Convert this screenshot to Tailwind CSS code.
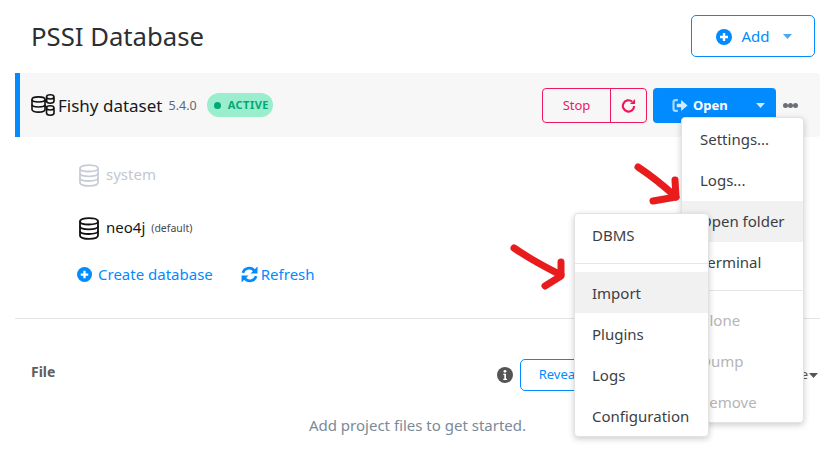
<!doctype html>
<html>
<head>
<meta charset="utf-8">
<script src="https://cdn.jsdelivr.net/npm/@tailwindcss/browser@4"></script>
</head>
<body class="bg-white">
<div class="relative w-[835px] h-[460px] overflow-hidden font-['Noto_Sans','Open_Sans',sans-serif] text-[#1f2328]">
  <div class="pl-[15px] pr-[15px]">
    <header class="flex items-center justify-between h-[73px] pl-[17px] pr-[5px] pb-[1px]">
      <h1 class="text-[25.700px] leading-none text-[#2b2f33] -ml-[1px] pt-[2px]">PSSI Database</h1>
      <button class="flex items-center justify-center w-[124px] h-[42px] border border-[#018bff] rounded-[5px] text-[#018bff] text-[15px] pl-[2px] pt-[1px]">
        <svg class="w-[16px] h-[16px] mr-[9px]" viewBox="0 0 16 16"><circle cx="8" cy="8" r="8" fill="#018bff"/><path d="M8 4v8M4 8h8" stroke="#fff" stroke-width="2.4"/></svg>
        Add
        <svg class="w-[9px] h-[5px] ml-[13px]" viewBox="0 0 9 5"><path d="M0 0h9L4.500 5z" fill="#4aa8f8"/></svg>
      </button>
    </header>

    <section class="flex items-center h-[64px] bg-[#f7f7f7] rounded-r-[4px] border-l-[5px] border-[#018bff] pl-[11px] pr-[22px]">
      <svg class="w-[24px] h-[24px] mr-[3px] shrink-0" viewBox="0 0 24 24" fill="none" stroke="#111" stroke-width="1.600">
        <path d="M1 6.500c0-3.500 13-3.500 13 0v10c0 3.500-13 3.500-13 0z"/><path d="M1 6.500c0 3.300 13 3.300 13 0M1 11.500c0 3.300 13 3.300 13 0"/>
        <path d="M15.500 4c0-3 7.500-3 7.500 0v4c0 3-7.500 3-7.500 0zM15.500 4c0 2.600 7.500 2.600 7.500 0"/>
        <path d="M15.500 15c0-3 7.500-3 7.500 0v5c0 3-7.500 3-7.500 0zM15.500 15c0 2.600 7.500 2.600 7.500 0"/>
        <path d="M14 12.500l2 2M14 9l2-2"/>
      </svg>
      <span class="text-[17px] text-[#16191c] whitespace-nowrap pt-[1px]">Fishy dataset</span>
      <span class="ml-[6px] text-[12.500px] text-[#5f6870] pt-[2px]">5.4.0</span>
      <span class="ml-[10px] flex items-center w-[66px] h-[24px] rounded-full bg-[#9aedcd] pl-[7px] text-[11px] font-bold tracking-[0.5px] text-[#00a878]">
        <span class="w-[7px] h-[7px] rounded-full bg-[#00a878] mr-[7px]"></span>ACTIVE
      </span>
      <div class="ml-auto flex items-center">
        <div class="flex h-[35px] w-[105px] border border-[#f0185c] rounded-[4px] text-[#f0185c]">
          <span class="flex items-center justify-center w-[68px] border-r border-[#f0185c] text-[13px] pt-[1px]">Stop</span>
          <span class="flex items-center justify-center flex-1">
            <svg class="w-[15px] h-[15px]" viewBox="0 0 16 16" fill="none" stroke="#f0185c" stroke-width="2.300"><path d="M14 8.500A6 6 0 1 1 11.800 3.800"/><path d="M15 1v5.500H9.500z" fill="#f0185c" stroke="none"/></svg>
          </span>
        </div>
        <button class="ml-[6px] flex items-center w-[123px] h-[35px] rounded-[4px] bg-[#018bff] text-white text-[13px] font-bold pl-[19px] pt-[1px]">
          <svg class="w-[16px] h-[13px] mr-[5px]" viewBox="0 0 14 12" fill="none"><path d="M5 1H3a2 2 0 0 0-2 2v6a2 2 0 0 0 2 2h2" stroke="#a9d8ff" stroke-width="2"/><path d="M4 4.300h4V1l6 5-6 5V7.700H4z" fill="#cfe9ff"/></svg>
          Open
          <svg class="w-[9px] h-[5px] ml-auto mr-[11px]" viewBox="0 0 9 5"><path d="M0 0h9L4.500 5z" fill="#cfe9ff"/></svg>
        </button>
        <span class="ml-[7px] flex">
          <span class="w-[5px] h-[5px] rounded-full bg-[#6a6f75]"></span><span class="w-[5px] h-[5px] rounded-full bg-[#6a6f75]"></span><span class="w-[5px] h-[5px] rounded-full bg-[#6a6f75]"></span>
        </span>
      </div>
    </section>

    <div class="pl-[64px] pt-[26px]">
      <div class="flex items-center h-[24px] text-[#c3c8d0]">
        <svg class="w-[20px] h-[23px] mr-[7px]" viewBox="0 0 20 23" fill="none" stroke="#c8cdd5" stroke-width="1.800"><path d="M1 4.500c0-4.500 18-4.500 18 0v14c0 4.500-18 4.500-18 0z"/><path d="M1 4.500c0 4 18 4 18 0M1 9.300c0 4 18 4 18 0M1 14c0 4 18 4 18 0"/></svg>
        <span class="text-[15px] pb-[2px]">system</span>
      </div>
      <div class="flex items-center h-[24px] mt-[29px]">
        <svg class="w-[20px] h-[23px] mr-[7px]" viewBox="0 0 20 23" fill="none" stroke="#111" stroke-width="1.800"><path d="M1 4.500c0-4.500 18-4.500 18 0v14c0 4.500-18 4.500-18 0z"/><path d="M1 4.500c0 4 18 4 18 0M1 9.300c0 4 18 4 18 0M1 14c0 4 18 4 18 0"/></svg>
        <span class="text-[15px] text-[#14171a] pb-[1px]">neo4j</span>
        <span class="ml-[6px] text-[10.500px] text-[#444a50] pt-[2px]">(default)</span>
      </div>
      <div class="flex items-center h-[24px] mt-[22px] -ml-[2px] text-[#018bff] text-[15px]">
        <svg class="w-[15px] h-[15px] mr-[6px]" viewBox="0 0 16 16"><circle cx="8" cy="8" r="8" fill="#018bff"/><path d="M8 4v8M4 8h8" stroke="#fff" stroke-width="2.400"/></svg>
        <span>Create database</span>
        <svg class="w-[17px] h-[17px] ml-[28px] mr-[3px]" viewBox="0 0 16 16" fill="none" stroke="#018bff" stroke-width="2.500"><path d="M1.800 6.500A6 6 0 0 1 12.500 4.500"/><path d="M14.200 9.500a6 6 0 0 1-10.700 2"/><path d="M15.500 0.500v6.500h-6.500z" fill="#018bff" stroke="none"/><path d="M0.500 15.500v-6.500h6.500z" fill="#018bff" stroke="none"/></svg>
        <span>Refresh</span>
      </div>
    </div>

    <hr class="mt-[32px] border-t border-[#e4e4e4]">

    <div class="flex items-center h-[32px] mt-[40px] pl-[17px]">
      <span class="text-[14px] font-bold text-[#5e5e5e] -mt-[8px] -ml-[1px]">File</span>
      <div class="ml-auto flex items-center">
        <svg class="w-[16px] h-[16px] mr-[7px]" viewBox="0 0 16 16"><circle cx="8" cy="8" r="8" fill="#555"/><circle cx="8" cy="4.300" r="1.400" fill="#fff"/><path d="M6.300 6.800h2.700v5h1v1.200H6.300v-1.200h1v-3.800h-1z" fill="#fff"/></svg>
        <button class="w-[120px] h-[32px] border border-[#018bff] rounded-[5px] text-[#018bff] text-[13px] text-left pl-[18px] whitespace-nowrap overflow-hidden">Reveal files</button>
        <span class="ml-[161px] text-[13px] text-[#555]">e</span>
        <svg class="w-[9px] h-[5px] ml-[1px] mr-[2px]" viewBox="0 0 9 5"><path d="M0 0h9L4.500 5z" fill="#555"/></svg>
      </div>
    </div>

    <p class="mt-[23px] text-center text-[15px] text-[#7b8a99]">Add project files to get started.</p>
  </div>

  <!-- Open menu -->
  <div class="absolute left-[681px] top-[117px] w-[123px] h-[306px] bg-white rounded-[4px] border border-[#e2e2e2] shadow-[0_2px_6px_rgba(0,0,0,0.2)] text-[15px] text-[#3b3f44] pt-[1px]">
    <div class="flex items-center h-[41px] pl-[18px]">Settings...</div>
    <div class="flex items-center h-[41px] pl-[18px]">Logs...</div>
    <div class="flex items-center h-[41px] pl-[18px] bg-[#f1f1f1]">Open folder</div>
    <div class="flex items-center h-[41px] pl-[18px]">Terminal</div>
    <div class="border-t border-[#e6e6e6] mt-[7px] mb-[9px]"></div>
    <div class="flex items-center h-[41px] pl-[18px] text-[#b5b5b5]">Clone</div>
    <div class="flex items-center h-[41px] pl-[18px] text-[#b5b5b5]">Dump</div>
    <div class="flex items-center h-[41px] pl-[18px] text-[#b5b5b5]">Remove</div>
  </div>

  <!-- DBMS menu -->
  <div class="absolute left-[574px] top-[213px] w-[135px] h-[224px] bg-white rounded-[4px] border border-[#e2e2e2] shadow-[0_2px_6px_rgba(0,0,0,0.2)] text-[15px] text-[#3b3f44] pt-[1px]">
    <div class="flex items-center h-[41px] pl-[17px]">DBMS</div>
    <div class="border-t border-[#e6e6e6] mt-[7px] mb-[8px]"></div>
    <div class="flex items-center h-[41px] pl-[17px] pt-[2px] bg-[#f1f1f1]">Import</div>
    <div class="flex items-center h-[41px] pl-[17px] pt-[2px]">Plugins</div>
    <div class="flex items-center h-[41px] pl-[17px] pt-[2px]">Logs</div>
    <div class="flex items-center h-[41px] pl-[17px] pt-[2px]">Configuration</div>
  </div>

  <!-- annotation arrows -->
  <svg class="absolute left-[630px] top-[160px] w-[60px] h-[50px]" viewBox="0 0 60 50" fill="none" stroke="#e81c1c" stroke-width="7" stroke-linecap="round" stroke-linejoin="round">
    <path d="M8 7C20 15 34 26 46 37"/><path d="M23 41L46 37L45 20"/>
  </svg>
  <svg class="absolute left-[505px] top-[240px] w-[65px] h-[55px]" viewBox="0 0 65 55" fill="none" stroke="#e81c1c" stroke-width="7" stroke-linecap="round" stroke-linejoin="round">
    <path d="M9 8C22 17 40 27 56 35"/><path d="M40 46L56 36L56 22"/>
  </svg>
</div>
</body>
</html>
